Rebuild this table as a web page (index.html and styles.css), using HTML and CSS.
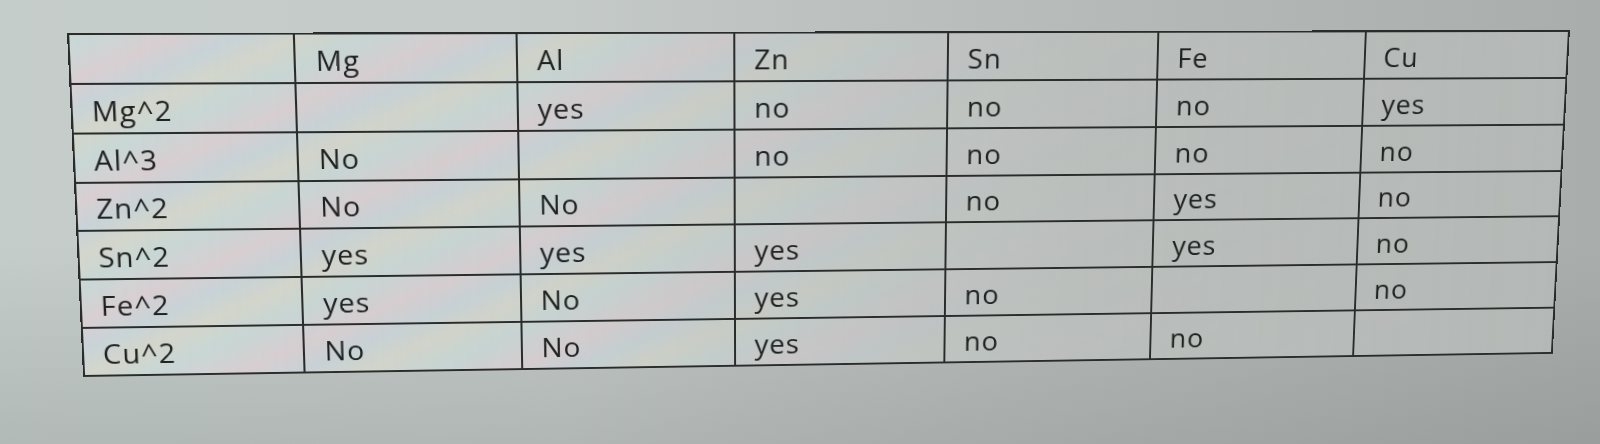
FILE: index.html
```html
<!DOCTYPE html>
<html lang="en">
<head>
<meta charset="utf-8">
<title>Displacement table</title>
<link rel="stylesheet" href="styles.css">
</head>
<body>
<main class="photo">
  <table class="grid">
    <tr><td></td><td>Mg</td><td>Al</td><td>Zn</td><td>Sn</td><td>Fe</td><td>Cu</td></tr>
    <tr><td class="label">Mg^2</td><td></td><td>yes</td><td>no</td><td>no</td><td>no</td><td>yes</td></tr>
    <tr><td class="label">Al^3</td><td>No</td><td></td><td>no</td><td>no</td><td>no</td><td>no</td></tr>
    <tr><td class="label">Zn^2</td><td>No</td><td>No</td><td></td><td>no</td><td>yes</td><td>no</td></tr>
    <tr><td class="label">Sn^2</td><td>yes</td><td>yes</td><td>yes</td><td></td><td>yes</td><td>no</td></tr>
    <tr><td class="label">Fe^2</td><td>yes</td><td>No</td><td>yes</td><td>no</td><td></td><td>no</td></tr>
    <tr><td class="label">Cu^2</td><td>No</td><td>No</td><td>yes</td><td>no</td><td>no</td><td></td></tr>
  </table>
</main>
</body>
</html>
```
FILE: styles.css
```css
html, body {
  margin: 0;
  padding: 0;
}

body {
  width: 1600px;
  height: 444px;
  overflow: hidden;
  background:
    linear-gradient(to bottom, rgba(60, 66, 64, 0) 55%, rgba(60, 66, 64, 0.14) 100%),
    linear-gradient(to right, #c5cdca 0%, #c4cac8 35%, #b7bbb9 65%, #a9adac 100%);
}

.photo {
  display: block;
  width: 1600px;
  height: 444px;
}

.grid {
  width: 1500px;
  height: 342px;
  table-layout: fixed;
  border-collapse: collapse;
  transform-origin: 0 0;
  transform: matrix3d(1.067327, -0.000725, 0, 0.000042514,
                      0.052418, 1.025459, 0, 0.000067889,
                      0, 0, 1, 0,
                      67, 33, 0, 1);
  background:
    linear-gradient(to right, rgba(184, 188, 186, 0) 0%, rgba(184, 188, 186, 0.15) 30%, rgba(184, 188, 186, 0.9) 66%, #b4b8b6 100%),
    repeating-linear-gradient(-24deg,
      rgba(232, 204, 212, 0.45) 0px,
      rgba(196, 222, 222, 0.45) 34px,
      rgba(226, 222, 196, 0.35) 60px,
      rgba(196, 214, 226, 0.45) 84px,
      rgba(232, 204, 212, 0.45) 110px),
    #ccd2cf;
  font-family: "Open Sans", "Noto Sans", "DejaVu Sans", sans-serif;
  font-size: 28px;
  letter-spacing: 1px;
  color: #202222;
}

.grid td {
  width: 214.28px;
  height: 48.86px;
  padding: 0 0 8px 19px;
  border: 2px solid #2a2c2c;
  vertical-align: bottom;
  line-height: 28px;
  white-space: nowrap;
  box-sizing: border-box;
}

.grid td.label {
  padding-left: 18px;
}
```
